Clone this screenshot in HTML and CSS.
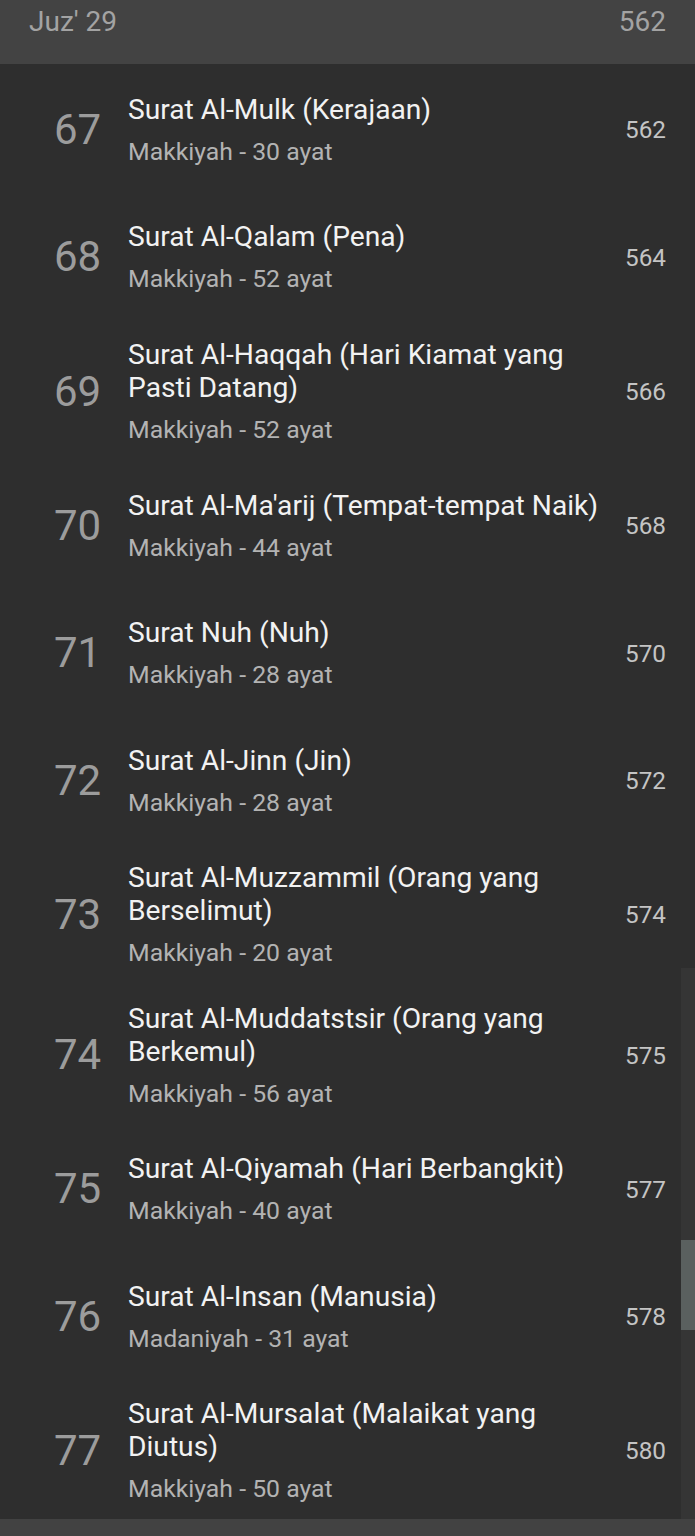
FILE: index.html
```html
<!DOCTYPE html>
<html>
<head>
<meta charset="utf-8">
<link rel="stylesheet" href="styles.css">
</head>
<body>
<div class="screen">
  <div class="juz">
    <span class="juz-name">Juz' 29</span>
    <span class="juz-page">562</span>
  </div>
  <div class="list">
    <div class="row"><div class="num">67</div><div class="info"><div class="title">Surat Al-Mulk (Kerajaan)</div><div class="sub">Makkiyah - 30 ayat</div></div><div class="page">562</div></div>
    <div class="row"><div class="num">68</div><div class="info"><div class="title">Surat Al-Qalam (Pena)</div><div class="sub">Makkiyah - 52 ayat</div></div><div class="page">564</div></div>
    <div class="row"><div class="num">69</div><div class="info"><div class="title">Surat Al-Haqqah (Hari Kiamat yang Pasti Datang)</div><div class="sub">Makkiyah - 52 ayat</div></div><div class="page">566</div></div>
    <div class="row"><div class="num">70</div><div class="info"><div class="title">Surat Al-Ma'arij (Tempat-tempat Naik)</div><div class="sub">Makkiyah - 44 ayat</div></div><div class="page">568</div></div>
    <div class="row"><div class="num">71</div><div class="info"><div class="title">Surat Nuh (Nuh)</div><div class="sub">Makkiyah - 28 ayat</div></div><div class="page">570</div></div>
    <div class="row"><div class="num">72</div><div class="info"><div class="title">Surat Al-Jinn (Jin)</div><div class="sub">Makkiyah - 28 ayat</div></div><div class="page">572</div></div>
    <div class="row"><div class="num">73</div><div class="info"><div class="title">Surat Al-Muzzammil (Orang yang Berselimut)</div><div class="sub">Makkiyah - 20 ayat</div></div><div class="page">574</div></div>
    <div class="row"><div class="num">74</div><div class="info"><div class="title">Surat Al-Muddatstsir (Orang yang Berkemul)</div><div class="sub">Makkiyah - 56 ayat</div></div><div class="page">575</div></div>
    <div class="row"><div class="num">75</div><div class="info"><div class="title">Surat Al-Qiyamah (Hari Berbangkit)</div><div class="sub">Makkiyah - 40 ayat</div></div><div class="page">577</div></div>
    <div class="row"><div class="num">76</div><div class="info"><div class="title">Surat Al-Insan (Manusia)</div><div class="sub">Madaniyah - 31 ayat</div></div><div class="page">578</div></div>
    <div class="row"><div class="num">77</div><div class="info"><div class="title">Surat Al-Mursalat (Malaikat yang Diutus)</div><div class="sub">Makkiyah - 50 ayat</div></div><div class="page">580</div></div>
    <div class="track"><div class="thumb"></div></div>
  </div>
  <div class="bottom"></div>
</div>
</body>
</html>
```
FILE: styles.css
```css
* { box-sizing: border-box; }
html, body { margin: 0; padding: 0; background: #2e2e2e; }
body { font-family: Roboto, "Noto Sans", "Liberation Sans", sans-serif; }
.screen { width: 695px; height: 1536px; overflow: hidden; display: flex; flex-direction: column; background: #2e2e2e; }
.juz {
  height: 64px;
  flex: none;
  background: #434343;
  display: flex;
  justify-content: space-between;
  align-items: flex-start;
  padding: 5px 29px 0 29px;
  font-size: 28px;
  color: #a3a3a3;
  line-height: 34px;
}
.list { position: relative; background: #2e2e2e; flex: none; }
.row {
  min-height: 127.5px;
  padding: 19px 29px 15px 0;
  display: flex;
  align-items: center;
}
.row:nth-child(n+3) { padding-bottom: 14.6px; }
.num {
  width: 128px;
  flex: none;
  font-size: 42px;
  color: #9c9c9c;
  padding-left: 54px;
  line-height: 44px;
}
.info { flex: 1; min-width: 0; padding-right: 12px; }
.title { font-size: 28.2px; line-height: 33px; color: #f2f2f2; }
.sub { font-size: 24.8px; line-height: 30px; color: #b3b3b3; margin-top: 11px; }
.page { flex: none; font-size: 24.3px; color: #c4c4c4; text-align: right; }
.track {
  position: absolute;
  right: 0;
  top: 904px;
  bottom: 0;
  width: 14px;
  background: #353535;
}
.thumb {
  position: absolute;
  left: 0;
  right: 0;
  top: 272px;
  height: 90px;
  background: #5a605f;
}
.bottom { flex: 1; background: #424242; }
```
